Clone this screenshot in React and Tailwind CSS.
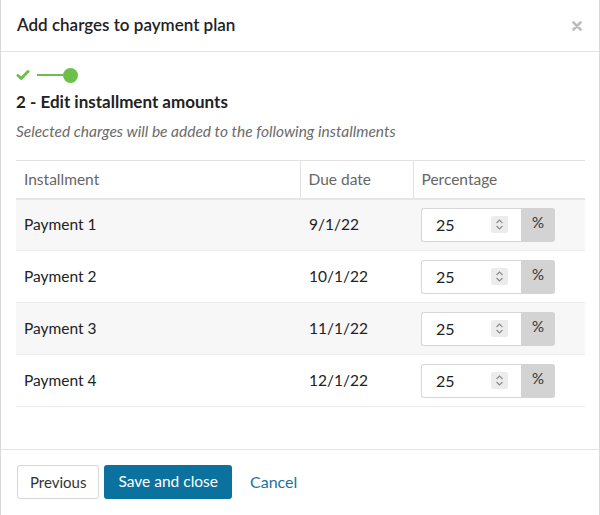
const rows = [
  { name: "Payment 1", due: "9/1/22", pct: 25 },
  { name: "Payment 2", due: "10/1/22", pct: 25 },
  { name: "Payment 3", due: "11/1/22", pct: 25 },
  { name: "Payment 4", due: "12/1/22", pct: 25 },
];

function Spinner() {
  return (
    <span className="w-[17px] h-[17px] rounded-[2px] bg-[#ececec] flex items-center justify-center">
      <svg width="9" height="13" viewBox="0 0 9 13" fill="none" stroke="#8a8a8a" strokeWidth="1.1">
        <path d="M1.5 5 L4.5 2 L7.5 5" />
        <path d="M1.5 8 L4.5 11 L7.5 8" />
      </svg>
    </span>
  );
}

function PercentInput({ value }) {
  return (
    <div className="flex h-[34px] w-[134px]">
      <div className="flex flex-1 items-center justify-between border border-[#d6d6d6] border-r-0 rounded-l-[3px] bg-white pl-[14px] pr-[13px]">
        <span className="text-[16px] text-[#222]">{value}</span>
        <Spinner />
      </div>
      <div className="w-[34px] bg-[#d3d3d3] rounded-r-[3px] flex items-center justify-center text-[15px] text-[#333] pb-[5px]">
        %
      </div>
    </div>
  );
}

export default function App() {
  return (
    <div
      className="w-[600px] h-[515px] bg-white border-x border-[#d9d9d9] flex flex-col text-[#222]"
      style={{ fontFamily: "Lato, 'Open Sans', sans-serif" }}
    >
      <header className="h-[52px] shrink-0 flex items-center justify-between pl-[16px] pr-[17px] border-b border-[#e3e3e3]">
        <h2 className="text-[17px] font-semibold pb-[1px]">Add charges to payment plan</h2>
        <svg width="10" height="10" viewBox="0 0 10 10" stroke="#bdbdbd" strokeWidth="2.6" strokeLinecap="round">
          <path d="M1.5 1.5 L8.5 8.5 M8.5 1.5 L1.5 8.5" />
        </svg>
      </header>

      <div className="flex-1 px-[15px] pt-[15px]">
        <div className="flex items-center h-[16px]">
          <svg width="14" height="12" viewBox="0 0 14 12" fill="none" stroke="#6cc04a" strokeWidth="3" strokeLinecap="round" strokeLinejoin="round">
            <path d="M2 6.5 L5.2 9.5 L12 2.5" />
          </svg>
          <div className="ml-[7px] w-[26px] h-[1.5px] bg-[#6cc04a]" />
          <div className="w-[15px] h-[15px] rounded-full bg-[#6cc04a]" />
        </div>

        <h3 className="mt-[9px] text-[17px] font-bold leading-[20px]">2 - Edit installment amounts</h3>
        <p className="mt-[9px] text-[15.5px] italic text-[#6b6b6b] leading-[20px]">
          Selected charges will be added to the following installments
        </p>

        <table className="mt-[19px] w-[569px] border-collapse text-[15.5px]">
          <thead>
            <tr className="border-t border-[#e2e2e2] border-b-2 border-b-[#e6e6e6] h-[38px]">
              <th className="w-[284px] text-left font-normal text-[#666] px-[8px]">Installment</th>
              <th className="w-[113px] text-left font-normal text-[#666] px-[8px] border-l border-[#e2e2e2]">
                Due date
              </th>
              <th className="text-left font-normal text-[#666] px-[8px] border-l border-[#e2e2e2]">Percentage</th>
            </tr>
          </thead>
          <tbody>
            {rows.map((r, i) => (
              <tr
                key={r.name}
                className={`h-[52px] border-b border-[#ececec] ${i % 2 === 0 ? "bg-[#f7f7f7]" : "bg-white"}`}
              >
                <td className="px-[8px]">{r.name}</td>
                <td className="px-[9px]">{r.due}</td>
                <td className="px-[8px]">
                  <PercentInput value={r.pct} />
                </td>
              </tr>
            ))}
          </tbody>
        </table>
      </div>

      <footer className="h-[66px] shrink-0 border-t border-[#e3e3e3] flex items-start gap-[5px] px-[16px] pt-[15px]">
        <button className="h-[34px] px-[12px] border border-[#d6d6d6] rounded-[3px] bg-white text-[15px] text-[#333]">
          Previous
        </button>
        <button className="h-[34px] px-[14px] rounded-[3px] bg-[#0b72a0] text-white text-[15.5px]">
          Save and close
        </button>
        <button className="h-[34px] px-[13px] text-[16px] text-[#1a73a0]">Cancel</button>
      </footer>
    </div>
  );
}
